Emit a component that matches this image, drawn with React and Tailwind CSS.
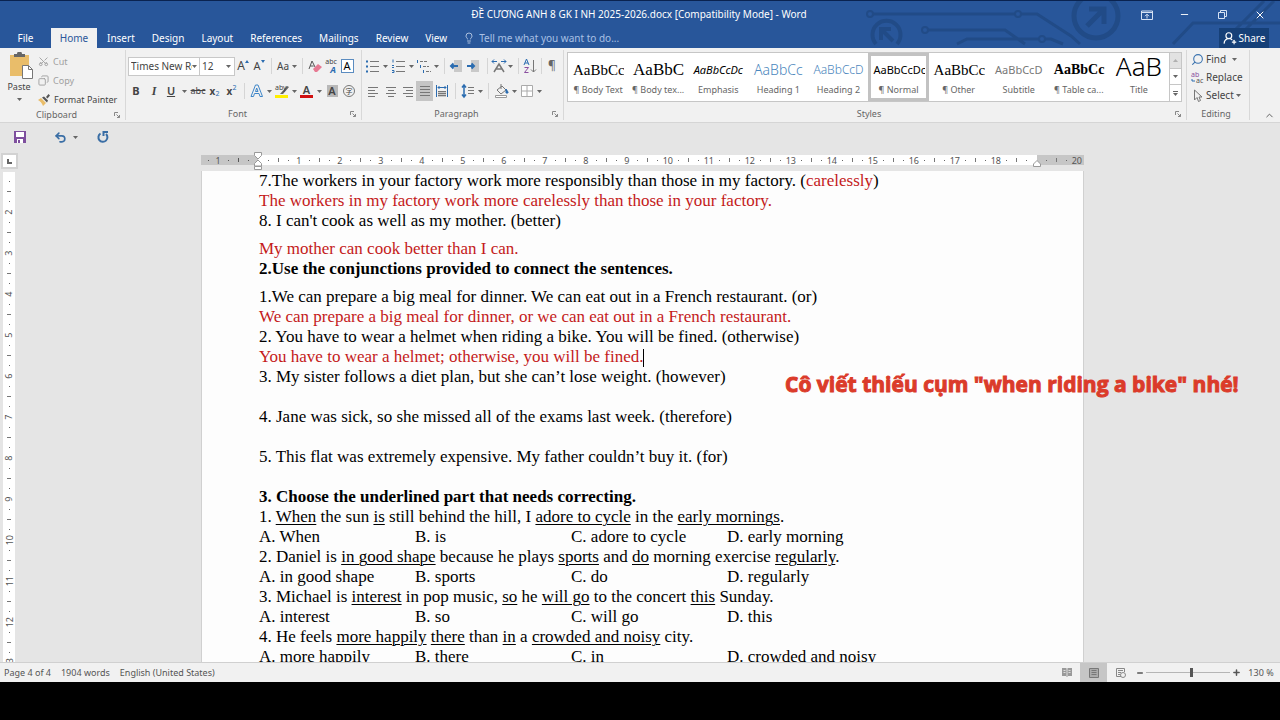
import { ChevronUp, Lightbulb, Search, Scissors, Copy, UserRoundPlus, X, Minus, Plus, Undo2 } from 'lucide-react';

const tabs = ['Insert', 'Design', 'Layout', 'References', 'Mailings', 'Review', 'View'];

const styleItems = [
  { label: '¶ Body Text', sample: 'AaBbCc', look: "font-['Liberation_Serif'] text-[15px] text-black" },
  { label: '¶ Body tex...', sample: 'AaBbCc', look: "font-['Liberation_Serif'] text-[17px] text-black" },
  { label: 'Emphasis', sample: 'AaBbCcDc', look: 'italic text-[11px] text-black' },
  { label: 'Heading 1', sample: 'AaBbCc', look: 'font-light text-[14px] text-[#4a86bd]' },
  { label: 'Heading 2', sample: 'AaBbCcD', look: 'font-light text-[12px] text-[#4a86bd]' },
  { label: '¶ Normal', sample: 'AaBbCcDc', look: 'text-[11px] text-black', selected: true },
  { label: '¶ Other', sample: 'AaBbCc', look: "font-['Liberation_Serif'] text-[15px] text-black" },
  { label: 'Subtitle', sample: 'AaBbCcD', look: 'text-[11px] text-[#777]' },
  { label: '¶ Table ca...', sample: 'AaBbCc', look: "font-['Liberation_Serif'] font-bold text-[14px] text-black" },
  { label: 'Title', sample: 'AaB', look: 'font-light text-[26px] text-black pb-2' },
];

const questions = [
  {
    text: <>1. <u>When</u> the sun <u>is</u> still behind the hill, I <u>adore to cycle</u> in the <u>early mornings</u>.</>,
    answers: ['A. When', 'B. is', 'C. adore to cycle', 'D. early morning'],
  },
  {
    text: <>2. Daniel is <u>in good shape</u> because he plays <u>sports</u> and <u>do</u> morning exercise <u>regularly</u>.</>,
    answers: ['A. in good shape', 'B. sports', 'C. do', 'D. regularly'],
  },
  {
    text: <>3. Michael is <u>interest</u> in pop music, <u>so</u> he <u>will go</u> to the concert <u>this</u> Sunday.</>,
    answers: ['A. interest', 'B. so', 'C. will go', 'D. this'],
  },
  {
    text: <>4. He feels <u>more happily</u> <u>there</u> than <u>in</u> a <u>crowded and noisy</u> city.</>,
    answers: ['A. more happily', 'B. there', 'C. in', 'D. crowded and noisy'],
  },
];

function Caret({ className = '' }) {
  return (
    <svg viewBox="0 0 5 3" className={`w-[5px] h-[3px] shrink-0 ${className}`}>
      <path d="M0 0h5L2.5 3z" fill="#666" />
    </svg>
  );
}

function Tool({ label, w = 'w-4', className = '', children }) {
  return (
    <button aria-label={label} className={`${w} h-5 shrink-0 flex items-center justify-center ${className}`}>
      {children}
    </button>
  );
}

function CaretTool({ label, w = 'w-2' }) {
  return (
    <Tool label={label} w={w}>
      <Caret />
    </Tool>
  );
}

function Sep() {
  return <span className="w-px h-4 mx-1 bg-[#d5d5d5] shrink-0" />;
}

// 16x16 line icon
function Icon({ children, stroke = '#777' }) {
  return (
    <svg viewBox="0 0 16 16" className="w-4 h-4 shrink-0" fill="none" stroke={stroke}>
      {children}
    </svg>
  );
}

function Launcher({ label }) {
  return (
    <button aria-label={label} className="w-2 h-2">
      <svg viewBox="0 0 8 8" className="w-2 h-2" fill="none" stroke="#888">
        <path d="M1.5 5V1.5H5M3.5 3.5l3 3M6.5 4v2.5H4" />
      </svg>
    </button>
  );
}

function Group({ title, className, launcher = true, children }) {
  return (
    <section className={`flex flex-col border-r border-[#d8d8d8] my-[2px] ${className}`}>
      <div className="flex-1">{children}</div>
      <div className="h-3 flex items-center pr-1">
        <h2 className="flex-1 text-center text-[9px] leading-3 text-[#666]">{title}</h2>
        {launcher && <Launcher label={`${title} settings`} />}
      </div>
    </section>
  );
}

function TitleArt() {
  return (
    <svg viewBox="0 0 420 48" className="absolute right-0 top-0 w-[420px] h-12" fill="none" stroke="#214b87" strokeWidth="2">
      <circle cx="10" cy="13" r="3" />
      <path d="M13 13h142M161 13h16l34 22 9 8" strokeWidth="3" />
      <circle cx="158" cy="13" r="3" />
      <circle cx="65" cy="29" r="3" />
      <path d="M68 29h77l20 14M97 43l10-5h72M185 38h6l12 5" strokeWidth="3" />
      <circle cx="182" cy="38" r="3" />
      <path d="M16 43a14 14 0 1 1 21 0" strokeWidth="4" />
      <path d="M21 39V28h10M22 29l11 11" strokeWidth="4" />
      <circle cx="236" cy="15" r="22" strokeWidth="5" />
      <path d="M227 25l17-17M229 8h15v15" strokeWidth="5" />
      <path d="M313 43l20-21h87M376 28l28-28M386 28l28-28" strokeWidth="3" />
    </svg>
  );
}

function TitleBar() {
  return (
    <header className="relative h-12 bg-[#28569a] border-t border-[#0a2350] text-white flex flex-col">
      <TitleArt />
      <div className="relative h-[27px] flex items-center">
        <h1 className="flex-1 pl-[148px] text-center text-[10px]">ĐỀ CƯƠNG ANH 8 GK I NH 2025-2026.docx [Compatibility Mode] - Word</h1>
        <div className="flex items-center w-[150px]">
          <Tool label="Ribbon display options" w="w-[33px]">
            <svg viewBox="0 0 12 10" className="w-3 h-[10px]" fill="none" stroke="#d5e1f3">
              <path d="M.5 1h11v8.500H.5zM.5 2.500h11M6 8.500v-4M4 6.200l2-2 2 2" />
            </svg>
          </Tool>
          <Tool label="Minimize" w="w-[43px]"><Minus size={11} strokeWidth={2} /></Tool>
          <Tool label="Restore" w="w-[33px]">
            <svg viewBox="0 0 9 9" className="w-[9px] h-[9px]" fill="none" stroke="#d5e1f3">
              <path d="M.5 2.500h6v6h-6zM2.500 2.500v-2h6v6h-2" />
            </svg>
          </Tool>
          <Tool label="Close" w="w-[41px]"><X size={12} strokeWidth={2} /></Tool>
        </div>
      </div>
      <nav className="relative flex-1 flex items-stretch text-[10px]">
        <a href="#file" className="w-[51px] flex items-center justify-center">File</a>
        <a href="#home" className="w-[46px] flex items-center justify-center bg-[#f1f1f1] text-[#2b579a]">Home</a>
        <div className="flex items-center gap-[17px] pl-[10px]">
          {tabs.map((name) => (
            <a key={name} href={`#${name.toLowerCase()}`}>{name}</a>
          ))}
        </div>
        <label className="flex items-center gap-1 pl-4 flex-1 text-[#a9c0e4]">
          <Lightbulb size={12} strokeWidth={1.5} className="text-[#d5e1f3]" />
          <input
            aria-label="Tell me what you want to do"
            placeholder="Tell me what you want to do..."
            className="w-40 bg-transparent outline-none placeholder:text-[#a9c0e4]"
          />
        </label>
        <button className="w-[50px] mr-[11px] flex items-center justify-center gap-[2px] bg-[#164078]">
          <UserRoundPlus size={14} strokeWidth={2} />
          Share
        </button>
      </nav>
    </header>
  );
}

function ClipboardGroup() {
  return (
    <Group title="Clipboard" className="w-[126px]">
      <div className="flex pt-[2px]">
        <button className="w-[38px] flex flex-col items-center text-[9px] leading-3 text-[#444]">
          <svg viewBox="0 0 24 27" className="w-6 h-[27px] ml-1">
            <path d="M1 3h19v21H1z" fill="#e9bd6a" />
            <path d="M5 5V2h3a2.500 2.500 0 0 1 5 0h3v3z" fill="#666" />
            <path d="M13.500 13.500h6l4 4v9h-10z" fill="#fff" stroke="#777" />
            <path d="M19.500 13.500v4h4" fill="none" stroke="#777" />
          </svg>
          <span className="pt-[2px]">Paste</span>
          <Caret className="mt-[5px]" />
        </button>
        <div className="flex flex-col text-[9px] leading-[19px] text-[#444]">
          <button className="flex items-center gap-1 text-[#a0a0a0]"><Scissors size={11} className="-rotate-90" />Cut</button>
          <button className="flex items-center gap-1 text-[#a0a0a0]"><Copy size={11} className="-scale-x-100" />Copy</button>
          <button className="flex items-center gap-1">
            <svg viewBox="0 0 12 12" className="w-3 h-3">
              <path d="M0 6l3-2 5 5-3 3c-1-3-3-5-5-6z" fill="#e9bd6a" />
              <path d="M4 3.500l2-1 4 4-1 2zM8 3l2.500-3L12 1.500 9.500 4.500z" fill="#555" />
            </svg>
            Format Painter
          </button>
        </div>
      </div>
    </Group>
  );
}

function FontGroup() {
  return (
    <Group title="Font" className="w-[236px]">
      <div className="flex flex-col gap-[5px] pt-[6px] pl-[2px] text-[#444]">
        <div className="flex items-center h-5">
          <div className="flex items-center h-[19px] w-[72px] bg-white border border-[#c8c8c8]">
            <select aria-label="Font name" className="appearance-none w-[63px] pl-[2px] text-[10px] bg-transparent outline-none">
              <option>Times New Roman</option>
            </select>
            <Caret />
          </div>
          <div className="flex items-center h-[19px] w-[35px] bg-white border border-l-0 border-[#c8c8c8]">
            <select aria-label="Font size" className="appearance-none w-[26px] pl-[2px] text-[10px] bg-transparent outline-none">
              <option>12</option>
            </select>
            <Caret />
          </div>
          <Tool label="Grow font">
            <span className="text-[12px]">A</span>
            <svg viewBox="0 0 4 3" className="w-1 h-[3px] mb-[9px]"><path d="M0 3l2-3 2 3z" fill="#2b6cb0" /></svg>
          </Tool>
          <Tool label="Shrink font">
            <span className="text-[11px]">A</span>
            <svg viewBox="0 0 4 3" className="w-1 h-[3px] mb-[9px]"><path d="M0 0l2 3 2-3z" fill="#2b6cb0" /></svg>
          </Tool>
          <Sep />
          <Tool label="Change case" w="w-[22px]" className="gap-[3px] text-[10px]">Aa<Caret /></Tool>
          <Sep />
          <Tool label="Clear formatting">
            <Icon>
              <path d="M2 11L5 3l3 6M3.200 8h3.500" stroke="#555" />
              <path d="M6 11l5-5 4 3-5 5H8z" fill="#e77a93" stroke="none" />
            </Icon>
          </Tool>
          <Tool label="Phonetic guide" className="flex-col">
            <span className="text-[7px] leading-[7px]">abc</span>
            <span className="text-[9px] leading-[9px] italic font-bold text-[#2b6cb0] pl-1">A</span>
          </Tool>
          <Tool label="Character border">
            <span className="w-[13px] h-[14px] flex items-center justify-center border border-[#5b8cc0] bg-white text-[11px] text-black">A</span>
          </Tool>
        </div>
        <div className="flex items-center h-5">
          <Tool label="Bold"><b className="text-[11px]">B</b></Tool>
          <Tool label="Italic" w="w-5"><i className="font-['Liberation_Serif'] font-bold text-[12px]">I</i></Tool>
          <Tool label="Underline" w="w-[14px]"><u className="font-semibold text-[11px]">U</u></Tool>
          <CaretTool label="Underline style" w="w-3" />
          <Tool label="Strikethrough"><s className="text-[9px]">abc</s></Tool>
          <Tool label="Subscript" w="w-[17px]"><b className="text-[10px]">x</b><span className="text-[7px] mt-[6px] text-[#2b6cb0]">2</span></Tool>
          <Tool label="Superscript" w="w-[17px]"><b className="text-[10px]">x</b><span className="text-[7px] mb-[6px] text-[#2b6cb0]">2</span></Tool>
          <Sep />
          <Tool label="Text effects">
            <Icon stroke="#3f86c8">
              <path d="M2 13.500L6.500 2h2.500l4.500 11.500h-2.500L10 10.500H5.500l-1 3zM6.500 8.500h2.500L7.700 5z" />
            </Icon>
          </Tool>
          <CaretTool label="Text effect options" />
          <Tool label="Highlight" w="w-[17px]">
            <svg viewBox="0 0 16 16" className="w-4 h-4">
              <path d="M1 12h13v3H1z" fill="#ffef00" />
              <path d="M6 11l7-8 2 1-6 7z" fill="#666" />
              <text x="1" y="7" fontSize="7" fill="#444">aby</text>
            </svg>
          </Tool>
          <CaretTool label="Highlight colours" />
          <Tool label="Font colour" w="w-[17px]" className="flex-col">
            <span className="text-[11px] leading-[11px] font-semibold">A</span>
            <span className="w-[13px] h-[3px] bg-[#d01010]" />
          </Tool>
          <CaretTool label="Font colours" />
          <Tool label="Character shading" w="w-[18px]">
            <span className="w-[11px] h-3 flex items-center justify-center bg-[#b8b8b8] text-[11px] font-semibold">A</span>
          </Tool>
          <Tool label="Enclose characters">
            <span className="w-3 h-3 flex items-center justify-center rounded-full border border-[#777] text-[7px] font-['Noto_Sans_CJK_SC',sans-serif]">字</span>
          </Tool>
        </div>
      </div>
    </Group>
  );
}

function ParagraphGroup() {
  return (
    <Group title="Paragraph" className="w-[202px]">
      <div className="flex flex-col gap-[5px] pt-[6px] pl-[2px]">
        <div className="flex items-center h-5">
          <Tool label="Bullets" w="w-[17px]">
            <Icon><path d="M5 3.500h9M5 8.500h9M5 13.500h9" /><path d="M1 3.500h2M1 8.500h2M1 13.500h2" stroke="#2b6cb0" strokeWidth="2" /></Icon>
          </Tool>
          <CaretTool label="Bullet styles" w="w-[9px]" />
          <Tool label="Numbering" w="w-[17px]">
            <Icon><path d="M5 3.500h9M5 8.500h9M5 13.500h9" /><path d="M2 1.500v3M1 7.500h2M1 9.500h2M1 12.500h2v2H1" stroke="#2b6cb0" /></Icon>
          </Tool>
          <CaretTool label="Numbering styles" w="w-[9px]" />
          <Tool label="Multilevel list">
            <Icon><path d="M4 3.500h7M7 8.500h6M10 13.500h5" strokeDasharray="3 1" /><path d="M1.500 2v3M4.500 7v3M7.500 12v3" stroke="#2b6cb0" /></Icon>
          </Tool>
          <CaretTool label="Multilevel styles" />
          <Sep />
          <Tool label="Decrease indent" w="w-[14px]">
            <svg viewBox="0 0 14 14" className="w-[14px] h-[14px]" fill="none">
              <path d="M5 1h8v12H5z" fill="#c9c9c9" /><path d="M9 7H2M4.500 4.500L2 7l2.500 2.500" stroke="#2b6cb0" strokeWidth="2" />
            </svg>
          </Tool>
          <Tool label="Increase indent" w="w-5">
            <svg viewBox="0 0 14 14" className="w-[14px] h-[14px]" fill="none">
              <path d="M5 1h8v12H5z" fill="#c9c9c9" /><path d="M1 7h7M5.500 4.500L8 7 5.500 9.500" stroke="#2b6cb0" strokeWidth="2" />
            </svg>
          </Tool>
          <Sep />
          <Tool label="Asian layout" w="w-[14px]">
            <Icon><path d="M3 14L8 6l5 8M5 11h6" strokeWidth="1.5" /><path d="M1 3.500h5M3 1.500l-2 2 2 2M15 3.500h-5M13 1.500l2 2-2 2" stroke="#2b6cb0" /></Icon>
          </Tool>
          <CaretTool label="Asian layout options" />
          <Sep />
          <Tool label="Sort" w="w-[14px]">
            <Icon>
              <path d="M2 7l2.500-6L7 7M3 5h3" stroke="#2b6cb0" />
              <path d="M2.500 9.500h4l-4 5h4" stroke="#8a4fa0" />
              <path d="M11.500 2v12M9 11.500l2.500 2.500 2.500-2.500" />
            </Icon>
          </Tool>
          <Sep />
          <Tool label="Show formatting marks" w="w-3" className="text-[12px] text-[#666]">¶</Tool>
        </div>
        <div className="flex items-center h-5">
          <Tool label="Align left" w="w-[18px]"><Icon><path d="M3 4.500h10M3 7.500h7M3 10.500h10M3 13.500h7" /></Icon></Tool>
          <Tool label="Align center" w="w-[17px]"><Icon><path d="M3 4.500h10M5 7.500h6M3 10.500h10M5 13.500h6" /></Icon></Tool>
          <Tool label="Align right" w="w-[17px]"><Icon><path d="M3 4.500h10M6 7.500h7M3 10.500h10M6 13.500h7" /></Icon></Tool>
          <Tool label="Justify" w="w-[17px]" className="bg-[#c5c5c5]"><Icon><path d="M3 3.500h10M3 6.500h10M3 9.500h10M3 12.500h10" /></Icon></Tool>
          <Tool label="Distribute" w="w-[18px]">
            <Icon><path d="M2.500 2v12M13.500 2v12" stroke="#2b6cb0" /><path d="M4 8h8v6H4z" fill="#c9c9c9" stroke="none" /><path d="M4 4.500h8M5.500 3L4 4.500 5.500 6M10.500 3L12 4.500 10.500 6" stroke="#2b6cb0" /><path d="M4 8.500h8M4 10.500h8M4 12.500h8" /></Icon>
          </Tool>
          <Sep />
          <Tool label="Line spacing">
            <Icon><path d="M4 2v12M2 4.500L4 2l2 2.500M2 11.500L4 14l2-2.500" stroke="#2b6cb0" strokeWidth="1.500" /><path d="M8 4.500h6M8 7.500h6M8 10.500h6" /></Icon>
          </Tool>
          <CaretTool label="Line spacing options" />
          <Sep />
          <Tool label="Shading" w="w-[17px]">
            <Icon><path d="M3 7l5-4 4 4-5 4zM7 1v5" /><path d="M12 6l2 3v1h-2z" fill="#2b6cb0" stroke="#2b6cb0" /><path d="M1.500 12.500h11v2h-11z" stroke="#999" fill="#fff" /></Icon>
          </Tool>
          <CaretTool label="Shading colours" w="w-[9px]" />
          <Tool label="Borders">
            <Icon stroke="#aaa"><path d="M2.500 2.500h11v11h-11zM8 3v10M3 8h10" fill="#fff" /></Icon>
          </Tool>
          <CaretTool label="Border options" w="w-[9px]" />
        </div>
      </div>
    </Group>
  );
}

function StylesGroup() {
  return (
    <Group title="Styles" className="flex-1">
      <div className="flex mt-[2px] ml-[3px] mr-1 h-[50px] bg-white border border-[#c6c6c6]">
        <div className="flex-1 grid grid-cols-10">
          {styleItems.map((s) => (
            <button
              key={s.label}
              className={`flex flex-col overflow-hidden px-px border-[3px] ${s.selected ? 'border-[#c2c2c2]' : 'border-transparent'}`}
            >
              <span className="w-full h-7 px-px flex items-center overflow-hidden">
                <span className={`mx-auto whitespace-nowrap leading-[26px] ${s.look}`}>{s.sample}</span>
              </span>
              <span className="w-full text-center whitespace-nowrap text-[9px] leading-3 text-[#666]">{s.label}</span>
            </button>
          ))}
        </div>
        <div className="w-3 grid grid-rows-3 border-l border-[#c6c6c6] divide-y divide-[#c6c6c6]">
          <button aria-label="Previous styles" className="flex items-center justify-center bg-[#e2e2e2]"><Caret className="rotate-180 opacity-40" /></button>
          <button aria-label="Next styles" className="flex items-center justify-center"><Caret /></button>
          <button aria-label="More styles" className="flex flex-col items-center justify-center gap-px"><span className="w-[5px] h-px bg-[#666]" /><Caret /></button>
        </div>
      </div>
    </Group>
  );
}

function EditingGroup() {
  return (
    <Group title="Editing" className="w-[63px]" launcher={false}>
      <div className="flex flex-col pl-1 text-[10px] leading-[18px] text-[#444]">
        <button className="flex items-center gap-[2px]"><Search size={13} className="-scale-x-100 text-[#3b73af]" />Find<Caret className="ml-1" /></button>
        <button className="flex items-center gap-[2px]">
          <svg viewBox="0 0 13 13" className="w-[13px] h-[13px]">
            <text x="0" y="6" fontSize="7" fill="#8a4fa0">ab</text>
            <text x="5" y="12" fontSize="7" fill="#555">ac</text>
            <path d="M1 8v2h3" fill="none" stroke="#2b6cb0" />
          </svg>
          Replace
        </button>
        <button className="flex items-center gap-[2px]">
          <svg viewBox="0 0 13 13" className="w-[13px] h-[13px]" fill="none" stroke="#777">
            <path d="M3.500 1v10l2.500-2.500 1.500 4 2-1-1.500-3.500h3z" />
          </svg>
          Select<Caret />
        </button>
      </div>
    </Group>
  );
}

function Ribbon() {
  return (
    <div className="flex h-[75px] bg-[#f1f1f1] border-b border-[#d5d5d5]">
      <ClipboardGroup />
      <FontGroup />
      <ParagraphGroup />
      <StylesGroup />
      <EditingGroup />
      <div className="w-[30px] flex items-end justify-center pb-[1px] pl-2">
        <button aria-label="Collapse the ribbon"><ChevronUp size={11} className="text-[#555]" /></button>
      </div>
    </div>
  );
}

function QuickAccess() {
  return (
    <div className="flex items-center h-7 pl-3">
      <Tool label="Save">
        <svg viewBox="0 0 12 12" className="w-3 h-3">
          <path d="M0 0h12v12H0z" fill="#7e4f9e" />
          <path d="M2 1h8v5H2zM3 8h6v4H3z" fill="#fff" />
          <path d="M4 9h2v3H4z" fill="#7e4f9e" />
        </svg>
      </Tool>
      <Tool label="Undo" className="ml-6 text-[#3a6ea5]"><Undo2 size={13} strokeWidth={3} /></Tool>
      <CaretTool label="Undo history" w="w-[14px]" />
      <Tool label="Redo" className="ml-[13px]">
        <svg viewBox="0 0 12 12" className="w-3 h-3" fill="none" stroke="#3a6ea5" strokeWidth="2">
          <path d="M3.500 2.500A4.500 4.500 0 1 0 9 3M6.500 5V1H11" />
        </svg>
      </Tool>
    </div>
  );
}

// four quarter marks: dot, line, dot, number
function RulerUnit({ n, vertical }) {
  return (
    <div className={`flex shrink-0 items-center ${vertical ? 'flex-col h-[41px] w-3' : 'w-[41px] h-[10px]'}`}>
      <span className="flex-1 flex items-center justify-center"><i className="w-px h-px bg-[#666]" /></span>
      <span className="flex-1 flex items-center justify-center"><i className={vertical ? 'w-1 h-px bg-[#777]' : 'w-px h-1 bg-[#777]'} /></span>
      <span className="flex-1 flex items-center justify-center"><i className="w-px h-px bg-[#666]" /></span>
      <span className={`flex-1 flex items-center justify-center text-[9px] leading-none ${vertical ? '-rotate-90' : ''}`}>{n}</span>
    </div>
  );
}

function HorizontalRuler() {
  return (
    <div className="relative flex w-[883px] h-[10px] text-[#555]">
      <div className="w-[57px] flex items-center justify-end pr-[5px] bg-[#c6c6c6] text-[9px] leading-none">
        <span className="w-[10px] flex justify-center"><i className="w-px h-px bg-[#555]" /></span>
        <span className="w-[10px] flex justify-center">1</span>
        <span className="w-[10px] flex justify-center"><i className="w-px h-px bg-[#555]" /></span>
        <span className="w-[10px] flex justify-center"><i className="w-px h-1 bg-[#555]" /></span>
        <span className="w-[10px] flex justify-center"><i className="w-px h-px bg-[#555]" /></span>
      </div>
      <div className="flex-1 flex bg-white pl-[5px] overflow-hidden">
        {Array.from({ length: 18 }, (_, i) => <RulerUnit key={i} n={i + 1} />)}
        <RulerUnit n="" />
      </div>
      <div className="w-[47px] flex bg-[#c6c6c6] pl-1"><RulerUnit n={20} /></div>
      <svg viewBox="0 0 8 18" className="absolute left-[53px] -top-[3px] w-2 h-[18px]" fill="#fff" stroke="#999">
        <path d="M.5.5h7v3L4 7 .5 3.500zM4 8l3.500 3.500V14h-7v-2.500zM.5 14.500h7v3h-7z" />
      </svg>
      <svg viewBox="0 0 8 7" className="absolute right-[43px] top-[5px] w-2 h-[7px]" fill="#fff" stroke="#999">
        <path d="M4 .5L7.500 4v2.500h-7V4z" />
      </svg>
    </div>
  );
}

function Line({ red, bold, gap, children }) {
  return (
    <p className={`min-h-5 whitespace-nowrap ${red ? 'text-[#c41a1a]' : ''} ${bold ? 'font-bold' : ''} ${gap ? 'mt-2' : ''}`}>
      {children}
    </p>
  );
}

function Page() {
  return (
    <article className="w-[883px] px-[57px] flex-1 overflow-hidden bg-[#fdfdfd] border-x border-[#d0d0d0] font-['Liberation_Serif',serif] text-[17px] leading-5 text-black [&_u]:underline-offset-2 [&_u]:decoration-1">
      <Line>7.The workers in your factory work more responsibly than those in my factory. (<span className="text-[#c41a1a]">carelessly</span>)</Line>
      <Line red>The workers in my factory work more carelessly than those in your factory.</Line>
      <Line>8. I can't cook as well as my mother. (better)</Line>
      <Line red gap>My mother can cook better than I can.</Line>
      <Line bold>2.Use the conjunctions provided to connect the sentences.</Line>
      <Line gap>1.We can prepare a big meal for dinner. We can eat out in a French restaurant. (or)</Line>
      <Line red>We can prepare a big meal for dinner, or we can eat out in a French restaurant.</Line>
      <Line>2. You have to wear a helmet when riding a bike. You will be fined. (otherwise)</Line>
      <Line red>You have to wear a helmet; otherwise, you will be fined.<span className="inline-block w-px h-[18px] align-middle bg-black" /></Line>
      <Line>3. My sister follows a diet plan, but she can’t lose weight. (however)</Line>
      <Line />
      <Line>4. Jane was sick, so she missed all of the exams last week. (therefore)</Line>
      <Line />
      <Line>5. This flat was extremely expensive. My father couldn’t buy it. (for)</Line>
      <Line />
      <Line bold>3. Choose the underlined part that needs correcting.</Line>
      {questions.map((q) => (
        <div key={q.answers[0]}>
          <Line>{q.text}</Line>
          <div className="grid grid-cols-[156px_156px_156px_auto] whitespace-nowrap">
            {q.answers.map((a) => <span key={a}>{a}</span>)}
          </div>
        </div>
      ))}
    </article>
  );
}

function Workspace() {
  return (
    <main className="relative flex-1 min-h-0 flex overflow-hidden">
      <div className="w-5 flex flex-col pt-[2px]">
        <button aria-label="Tab selector" className="w-[17px] h-[16px] ml-px flex items-center justify-center bg-white border-2 border-[#d2d2d2]">
          <i className="w-[5px] h-[5px] border-l-2 border-b-2 border-[#666]" />
        </button>
        <div className="flex-1 min-h-0 overflow-hidden mt-[3px] ml-[3px] w-3 pt-1 bg-white text-[#555]">
          {Array.from({ length: 12 }, (_, i) => <RulerUnit key={i} n={i + 2} vertical />)}
        </div>
      </div>
      <div className="flex-1 flex flex-col items-center pt-1">
        <HorizontalRuler />
        <div className="h-[6px] shrink-0" />
        <Page />
      </div>
      <div className="w-[15px]" />
      <p className="absolute left-[785px] top-[219px] whitespace-nowrap font-['Open_Sans',sans-serif] font-bold text-[21px] leading-7 text-[#db3b2a] [-webkit-text-stroke:1px_#db3b2a]">
        Cô viết thiếu cụm "when riding a bike" nhé!
      </p>
    </main>
  );
}

function StatusBar() {
  return (
    <footer className="flex items-center h-5 shrink-0 bg-[#f1f1f1] border-t border-[#d0d0d0] pl-1 text-[9px] text-[#555]">
      <div className="flex-1 flex gap-[10px]">
        <span>Page 4 of 4</span>
        <span>1904 words</span>
        <span>English (United States)</span>
      </div>
      <Tool label="Read mode" w="w-[27px]">
        <svg viewBox="0 0 10 9" className="w-[10px] h-[9px]"><path d="M0 0h4l1 1 1-1h4v8H6L5 9 4 8H0z" fill="#999" /><path d="M5 1v7M1.500 2.500h2M1.500 4.500h2M6.500 2.500h2M6.500 4.500h2" stroke="#ddd" /></svg>
      </Tool>
      <Tool label="Print layout" w="w-[27px]" className="bg-[#c6c6c6]">
        <svg viewBox="0 0 10 10" className="w-[10px] h-[10px]"><path d="M.5.5h9v9h-9z" fill="#aaa" stroke="#777" /><path d="M2.500 2.500h5M2.500 4.500h5M2.500 6.500h5" stroke="#777" /></svg>
      </Tool>
      <Tool label="Web layout" w="w-[27px]">
        <svg viewBox="0 0 10 10" className="w-[10px] h-[10px]" fill="none" stroke="#888"><path d="M5 8.500H.5v-8h8V4M2 2.500h5M2 4.500h3M2 6.500h2" /><circle cx="7" cy="7" r="2.500" /></svg>
      </Tool>
      <Tool label="Zoom out" w="w-3"><Minus size={8} strokeWidth={4} /></Tool>
      <input
        type="range"
        aria-label="Zoom"
        min="0"
        max="100"
        defaultValue="54"
        className="appearance-none w-[84px] h-[10px] bg-[linear-gradient(#b5b5b5,#b5b5b5)] bg-[length:100%_1px] bg-center bg-no-repeat [&::-webkit-slider-thumb]:appearance-none [&::-webkit-slider-thumb]:w-[3px] [&::-webkit-slider-thumb]:h-[9px] [&::-webkit-slider-thumb]:bg-[#555]"
      />
      <Tool label="Zoom in" w="w-3"><Plus size={9} strokeWidth={4} /></Tool>
      <span className="w-[38px] text-center">130 %</span>
    </footer>
  );
}

export default function App() {
  return (
    <div className="h-screen flex flex-col bg-[#e5e5e5] font-['Noto_Sans','Open_Sans',sans-serif]">
      <TitleBar />
      <Ribbon />
      <QuickAccess />
      <Workspace />
      <StatusBar />
      <div className="h-[38px] shrink-0 bg-black" />
    </div>
  );
}
